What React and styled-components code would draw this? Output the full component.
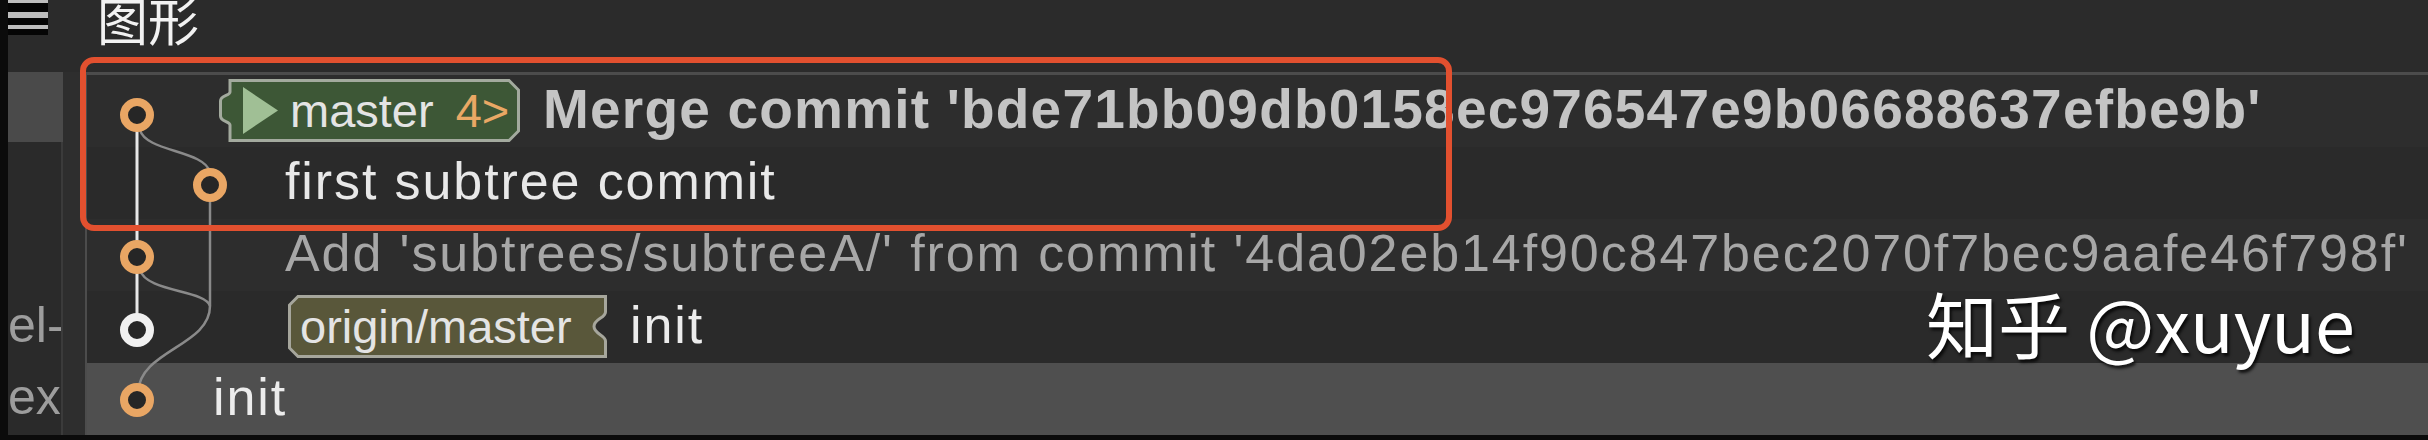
import styled, { createGlobalStyle } from "styled-components";

const GlobalStyle = createGlobalStyle`
  html, body {
    margin: 0;
    padding: 0;
    background: #0b0b0b;
  }
  body {
    width: 2428px;
    height: 440px;
    overflow: hidden;
    font-family: "Liberation Sans", Arial, sans-serif;
  }
`;

const ORANGE = "#e9a664";

const commits = [
  { id: 1, indent: 130, bg: "#2d2d2d", badge: "master", text: "Merge commit 'bde71bb09db0158ec976547e9b06688637efbe9b'", bold: true, color: "#c4c4c4" },
  { id: 2, indent: 198, bg: "#2a2a2a", text: "first subtree commit", color: "#e8e8e8" },
  { id: 3, indent: 198, bg: "#2d2d2d", text: "Add 'subtrees/subtreeA/' from commit '4da02eb14f90c847bec2070f7bec9aafe46f798f'", color: "#a7a7a7" },
  { id: 4, indent: 201, bg: "#2a2a2a", badge: "origin", text: "init", color: "#ececec" },
  { id: 5, indent: 126, bg: "#4f4f4f", text: "init", color: "#ececec" },
];

const App = () => {
  return (
    <Screen>
      <GlobalStyle />
      <Sidebar>
        <SideTop>
          <svg width="40" height="36" viewBox="0 0 40 36">
            <rect x="0" y="0" width="40" height="3" fill="#bdbdbd" />
            <rect x="0" y="3" width="40" height="9" fill="#050505" />
            <rect x="0" y="12" width="40" height="6" fill="#bdbdbd" />
            <rect x="0" y="18" width="40" height="7" fill="#050505" />
            <rect x="0" y="25" width="40" height="4" fill="#bdbdbd" />
            <rect x="0" y="29" width="40" height="6" fill="#050505" />
          </svg>
        </SideTop>
        <SideSelected />
        <SideList>
          <SideItem>el-</SideItem>
          <SideItem>ex</SideItem>
        </SideList>
      </Sidebar>

      <MainPanel>
        <Header>
          <Title>图形</Title>
        </Header>
        <Body>
          <Gutter />
          <List>
            {commits.map((c) => (
              <Row key={c.id} $bg={c.bg} $indent={c.indent}>
                {c.badge === "master" && (
                  <Badge $w={303}>
                    <BadgeShape width="303" height="63" viewBox="0 0 303 63">
                      <path
                        d="M13 1.5 H292 L301.5 11 V52 L292 61.5 H13 V46 C13 42 3.5 43 3.5 37 V22 C3.5 16 13 17 13 13 Z"
                        fill="#3d5736"
                        stroke="#a3aa9e"
                        strokeWidth="3"
                      />
                    </BadgeShape>
                    <BadgeContent $pad={26}>
                      <svg width="35" height="47" viewBox="0 0 35 47">
                        <polygon points="0,0 35,23.5 0,47" fill="#a0bf95" />
                      </svg>
                      <BadgeLabel>master</BadgeLabel>
                      <Ahead>4&gt;</Ahead>
                    </BadgeContent>
                  </Badge>
                )}
                {c.badge === "origin" && (
                  <Badge $w={319}>
                    <BadgeShape width="319" height="63" viewBox="0 0 319 63">
                      <path
                        d="M10 1.5 H317.5 V17 C317.5 23 306 24 306 31.5 C306 39 317.5 40 317.5 46 V61.5 H10 L1.5 53 V10 Z"
                        fill="#59573a"
                        stroke="#a6a69c"
                        strokeWidth="3"
                      />
                    </BadgeShape>
                    <BadgeContent $pad={12}>
                      <BadgeLabel>origin/master</BadgeLabel>
                    </BadgeContent>
                  </Badge>
                )}
                <CommitText $bold={c.bold} $color={c.color}>
                  {c.text}
                </CommitText>
              </Row>
            ))}

            <GraphLayer width="200" height="360" viewBox="87 75 200 360">
              <line x1="137" y1="120" x2="137" y2="320" stroke="#e8e8e8" strokeWidth="3" />
              <g fill="none" stroke="#8a8a8a" strokeWidth="2.5">
                <path d="M140 130 C146 152 204 150 210 172" />
                <path d="M210 190 V306" />
                <path d="M140 270 C146 292 206 290 210 306" />
                <path d="M210 306 C210 346 140 350 138 392" />
              </g>
              <Dot cx={137} cy={115} color={ORANGE} />
              <Dot cx={210} cy={185} color={ORANGE} />
              <Dot cx={137} cy={257} color={ORANGE} />
              <Dot cx={137} cy={330} color="#f0f0f0" />
              <Dot cx={137} cy={400} color={ORANGE} />
            </GraphLayer>
          </List>
        </Body>
      </MainPanel>

      <Highlight />
      <Watermark>知乎 @xuyue</Watermark>
    </Screen>
  );
};

const Dot = ({ cx, cy, color }) => (
  <circle cx={cx} cy={cy} r="13" fill="#262626" stroke={color} strokeWidth="8" />
);

const Screen = styled.div`
  position: relative;
  display: flex;
  width: 2428px;
  height: 440px;
  box-sizing: border-box;
  padding: 0 0 5px 8px;
  background: #0b0b0b;
  overflow: hidden;
`;

const Sidebar = styled.div`
  width: 55px;
  flex-shrink: 0;
  display: flex;
  flex-direction: column;
`;

const SideTop = styled.div`
  height: 72px;
  background: #2b2b2b;
`;

const SideSelected = styled.div`
  height: 70px;
  background: #4a4a4a;
`;

const SideList = styled.div`
  flex: 1;
  display: flex;
  flex-direction: column;
  justify-content: flex-end;
  background: #2a2a2a;
  border-right: 2px solid #3b3b3b;
`;

const SideItem = styled.div`
  height: 72px;
  line-height: 68px;
  font-size: 50px;
  color: #9d9d9d;
  overflow: hidden;
  white-space: nowrap;
`;

const MainPanel = styled.div`
  flex: 1;
  display: flex;
  flex-direction: column;
  min-width: 0;
`;

const Header = styled.div`
  height: 72px;
  flex-shrink: 0;
  background: #2b2b2b;
  padding-left: 34px;
  overflow: hidden;
`;

const Title = styled.div`
  margin-top: -6px;
  font-family: "Noto Sans CJK SC", sans-serif;
  font-size: 51px;
  line-height: 50px;
  color: #f2f2f2;
`;

const Body = styled.div`
  flex: 1;
  display: flex;
`;

const Gutter = styled.div`
  width: 22px;
  flex-shrink: 0;
  background: #2e2e2e;
`;

const List = styled.div`
  position: relative;
  flex: 1;
  min-width: 0;
  border-top: 3px solid #4c4c4c;
  border-left: 2px solid #4c4c4c;
`;

const Row = styled.div`
  height: 72px;
  display: flex;
  align-items: center;
  gap: 23px;
  padding-left: ${(p) => p.$indent}px;
  background: ${(p) => p.$bg};
  white-space: nowrap;
  overflow: hidden;
`;

const CommitText = styled.span`
  margin-bottom: 4px;
  font-size: ${(p) => (p.$bold ? "55px" : "52px")};
  font-weight: ${(p) => (p.$bold ? 700 : 400)};
  letter-spacing: ${(p) => (p.$bold ? "1.2px" : "1.9px")};
  color: ${(p) => p.$color};
`;

const Badge = styled.span`
  position: relative;
  flex-shrink: 0;
  width: ${(p) => p.$w}px;
  height: 63px;
  margin-bottom: 1px;
`;

const BadgeShape = styled.svg`
  position: absolute;
  inset: 0;
`;

const BadgeContent = styled.span`
  position: relative;
  display: flex;
  align-items: center;
  height: 63px;
  padding-left: ${(p) => p.$pad}px;
`;

const BadgeLabel = styled.span`
  margin-left: 12px;
  font-size: 47px;
  line-height: 63px;
  color: #e4e4e4;
  &:first-child {
    margin-left: 0;
  }
`;

const Ahead = styled.span`
  margin-left: 22px;
  font-size: 47px;
  line-height: 63px;
  color: #e9a865;
`;

const GraphLayer = styled.svg`
  position: absolute;
  top: 0;
  left: 0;
`;

const Highlight = styled.div`
  position: absolute;
  left: 80px;
  top: 57px;
  width: 1372px;
  height: 174px;
  box-sizing: border-box;
  border: 6px solid #e2502f;
  border-radius: 14px;
  pointer-events: none;
`;

const Watermark = styled.div`
  position: absolute;
  left: 1926px;
  top: 286px;
  font-family: "Noto Sans CJK SC", sans-serif;
  font-size: 72px;
  line-height: 72px;
  color: #ffffff;
  text-shadow: 2px 3px 3px rgba(0, 0, 0, 0.75);
  white-space: nowrap;
`;

export default App;
